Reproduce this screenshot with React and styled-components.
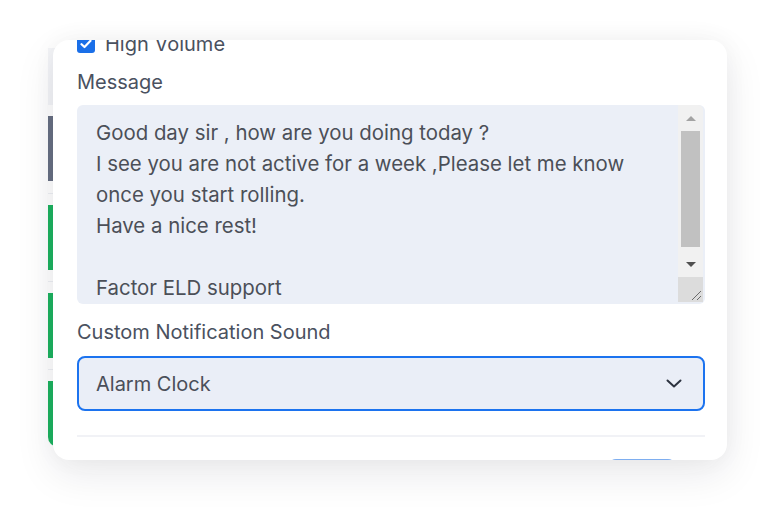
import React, { useLayoutEffect, useRef } from 'react';
import styled, { createGlobalStyle } from 'styled-components';

const GlobalStyle = createGlobalStyle`
  html, body {
    margin: 0;
    padding: 0;
    background: #ffffff;
    font-family: Inter, "Noto Sans", "Liberation Sans", sans-serif;
  }
  * { box-sizing: border-box; }
`;

/* the screen behind the modal */
const Stage = styled.div`
  position: relative;
  width: 776px;
  height: 516px;
  overflow: hidden;
  padding: 48px 0 0 48px;
`;

const BackPanel = styled.div`
  width: 660px;
  height: 399px;
  background: #ffffff;
  border-radius: 0 0 0 10px;
  overflow: hidden;
`;

const BackHeader = styled.div`
  height: 57px;
  background: #f4f5f8;
`;

const BackRow = styled.div`
  height: 88px;
  padding-top: 11px;
  border-top: ${(p) => (p.first ? 'none' : '1px solid #eef0f4')};
`;

const RowMarker = styled.div`
  width: 5px;
  height: 65px;
  background: ${(p) => p.color};
`;

/* modal */
const Card = styled.div`
  position: absolute;
  left: 53px;
  top: 40px;
  width: 674px;
  height: 420px;
  background: #ffffff;
  border-radius: 16px;
  box-shadow: 0 14px 40px rgba(20, 24, 40, 0.09), 0 0 24px rgba(20, 24, 40, 0.04);
  overflow: hidden;
`;

const Body = styled.div`
  padding: 24px 22px 30px 24px;
  display: flex;
  flex-direction: column;
`;

const CheckRow = styled.label`
  display: flex;
  align-items: center;
  gap: 10px;
  height: 18px;
  margin-bottom: 16px;
  font-size: 20px;
  color: #4a5160;
`;

const CheckBox = styled.span`
  width: 18px;
  height: 18px;
  border-radius: 3px;
  background: #1a6fe8;
  display: flex;
  align-items: center;
  justify-content: center;
`;

const Label = styled.div`
  font-size: 20px;
  line-height: 26px;
  color: #4a5160;
  margin-top: ${(p) => p.gap || 0}px;
  margin-bottom: ${(p) => p.after}px;
`;

const TextBox = styled.div`
  display: flex;
  height: 199px;
  background: #ebeff7;
  border-radius: 6px;
  padding: 0 2px 2px 0;
`;

const MessageText = styled.div`
  flex: 1;
  padding: 12px 19px 0 19px;
  font-size: 20.4px;
  line-height: 31px;
  color: #4b4f58;
  white-space: pre-wrap;
  overflow: hidden;
`;

const ScrollCol = styled.div`
  width: 25px;
  display: flex;
  flex-direction: column;
  background: #f1f1f1;
  border-top-right-radius: 5px;
`;

const ArrowBtn = styled.div`
  height: ${(p) => p.h}px;
  display: flex;
  align-items: center;
  justify-content: center;

  &::before {
    content: '';
    width: 0;
    height: 0;
    border-left: 5px solid transparent;
    border-right: 5px solid transparent;
    ${(p) =>
      p.up
        ? `border-bottom: 5px solid ${p.color};`
        : `border-top: 5px solid ${p.color};`}
  }
`;

const Track = styled.div`
  flex: 1;
  padding: 0 3px;
`;

const Thumb = styled.div`
  height: 116px;
  background: #c1c1c1;
`;

const Corner = styled.div`
  height: 25px;
  background: #dcdcdc;
  display: flex;
  align-items: flex-end;
  justify-content: flex-end;
`;

const Select = styled.div`
  height: 55px;
  border: 2px solid #1c73ef;
  border-radius: 8px;
  background: #eaeef7;
  display: flex;
  align-items: center;
  justify-content: space-between;
  padding: 0 21px 0 17px;
  font-size: 20px;
  color: #4a4f5a;
`;

const Divider = styled.div`
  height: 2px;
  margin-top: 24px;
  background: #f1f2f6;
`;

const Footer = styled.div`
  display: flex;
  justify-content: flex-end;
  padding-right: 29px;
  margin-top: 22px;
`;

const SaveButton = styled.div`
  width: 68px;
  height: 40px;
  border-radius: 8px;
  background: #7eaef0;
`;

const rows = ['#687083', '#1db360', '#1db360', '#1db360'];

const message = `Good day sir , how are you doing today ?
I see you are not active for a week ,Please let me know
once you start rolling.
Have a nice rest!

Factor ELD support
`;

export default function App() {
  const cardRef = useRef(null);

  useLayoutEffect(() => {
    // the modal is shown scrolled a little down
    if (cardRef.current) cardRef.current.scrollTop = 29;
  }, []);

  return (
    <Stage>
      <GlobalStyle />
      <BackPanel>
        <BackHeader />
        {rows.map((c, i) => (
          <BackRow key={i} first={i === 0}>
            <RowMarker color={c} />
          </BackRow>
        ))}
      </BackPanel>

      <Card ref={cardRef}>
        <Body>
          <CheckRow>
            <CheckBox>
              <svg width="12" height="10" viewBox="0 0 12 10">
                <path d="M1.5 5.2 L4.5 8 L10.5 1.8" fill="none" stroke="#fff" strokeWidth="2.2" strokeLinecap="round" strokeLinejoin="round" />
              </svg>
            </CheckBox>
            High Volume
          </CheckRow>

          <Label after={10}>Message</Label>
          <TextBox>
            <MessageText>{message}</MessageText>
            <ScrollCol>
              <ArrowBtn h={26} up color="#a3a3a3" />
              <Track>
                <Thumb />
              </Track>
              <ArrowBtn h={25} color="#505050" />
              <Corner>
                <svg width="14" height="14" viewBox="0 0 14 14">
                  <path d="M12 3 L3 12 M12 8 L8 12" stroke="#6a6a6a" strokeWidth="1" />
                </svg>
              </Corner>
            </ScrollCol>
          </TextBox>

          <Label gap={15} after={11}>Custom Notification Sound</Label>
          <Select>
            Alarm Clock
            <svg width="16" height="9" viewBox="0 0 16 9">
              <path d="M1.5 1.5 L8 7.5 L14.5 1.5" fill="none" stroke="#2d3340" strokeWidth="2" strokeLinecap="round" strokeLinejoin="round" />
            </svg>
          </Select>

          <Divider />
          <Footer>
            <SaveButton />
          </Footer>
        </Body>
      </Card>
    </Stage>
  );
}
